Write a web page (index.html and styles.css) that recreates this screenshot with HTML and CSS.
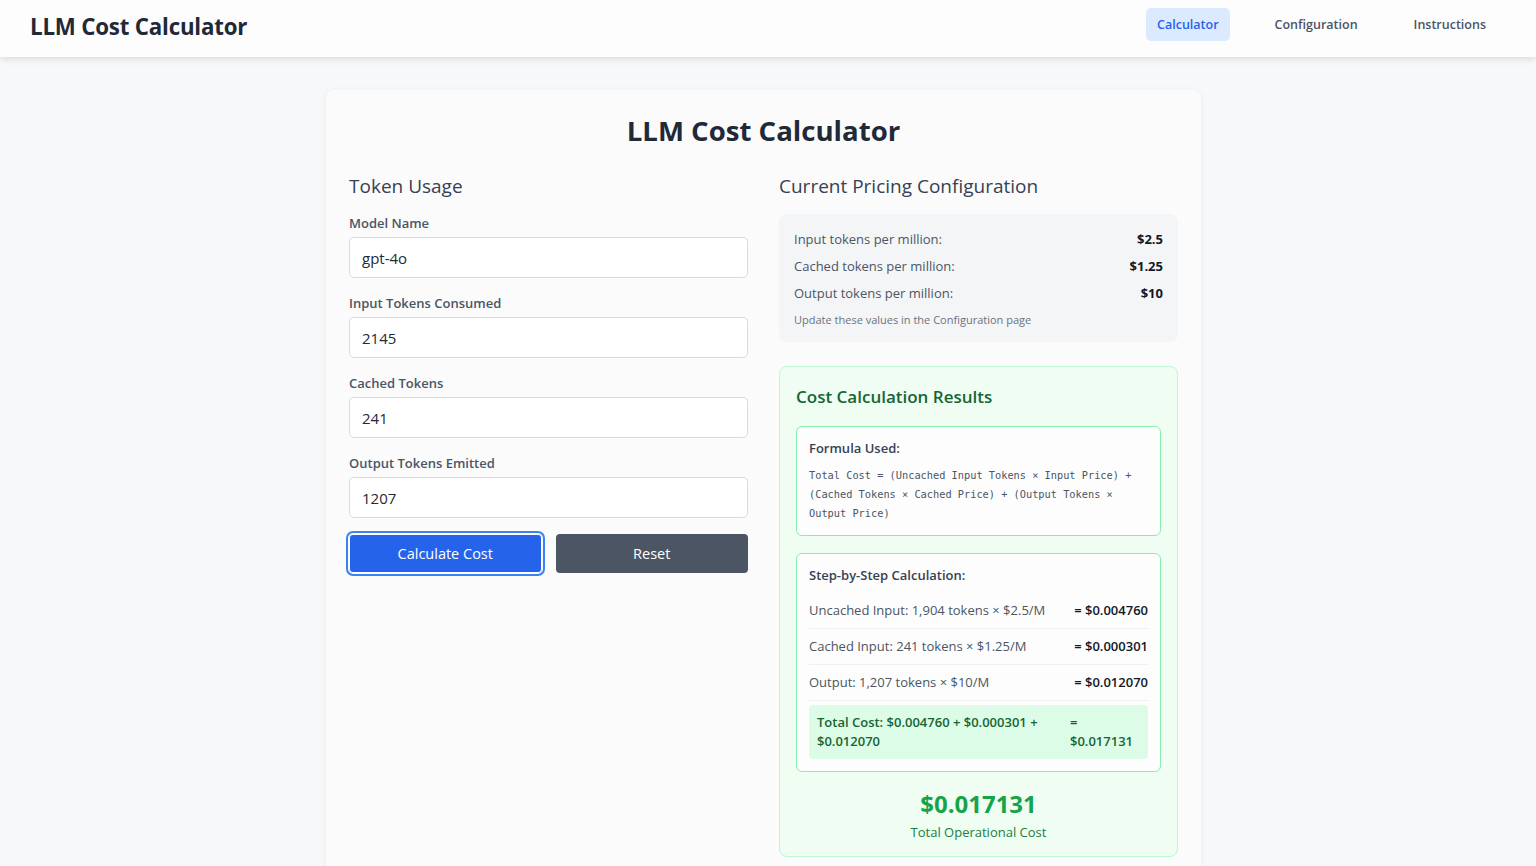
FILE: index.html
```html
<!DOCTYPE html>
<html lang="en">
<head>
    <meta charset="UTF-8">
    <meta name="viewport" content="width=device-width, initial-scale=1.0">
    <title>LLM Cost Calculator</title>
    <link rel="stylesheet" href="styles.css">
</head>
<body>
    <header class="topbar">
        <div class="brand">LLM Cost Calculator</div>
        <nav class="nav">
            <a class="nav-link active" href="#">Calculator</a>
            <a class="nav-link" href="#">Configuration</a>
            <a class="nav-link" href="#">Instructions</a>
        </nav>
    </header>

    <main class="page">
        <section class="card">
            <h1 class="card-title">LLM Cost Calculator</h1>

            <div class="columns">
                <div class="col">
                    <h2 class="section-title">Token Usage</h2>

                    <div class="field">
                        <label for="modelName">Model Name</label>
                        <input type="text" id="modelName" value="gpt-4o">
                    </div>
                    <div class="field">
                        <label for="inputTokens">Input Tokens Consumed</label>
                        <input type="text" id="inputTokens" value="2145">
                    </div>
                    <div class="field">
                        <label for="cachedTokens">Cached Tokens</label>
                        <input type="text" id="cachedTokens" value="241">
                    </div>
                    <div class="field">
                        <label for="outputTokens">Output Tokens Emitted</label>
                        <input type="text" id="outputTokens" value="1207">
                    </div>

                    <div class="buttons">
                        <button class="btn btn-primary">Calculate Cost</button>
                        <button class="btn btn-secondary">Reset</button>
                    </div>
                </div>

                <div class="col">
                    <h2 class="section-title">Current Pricing Configuration</h2>

                    <div class="pricing">
                        <div class="price-row"><span>Input tokens per million:</span><strong>$2.5</strong></div>
                        <div class="price-row"><span>Cached tokens per million:</span><strong>$1.25</strong></div>
                        <div class="price-row"><span>Output tokens per million:</span><strong>$10</strong></div>
                        <p class="hint">Update these values in the Configuration page</p>
                    </div>

                    <div class="results">
                        <h3 class="results-title">Cost Calculation Results</h3>

                        <div class="box">
                            <h4 class="box-title">Formula Used:</h4>
                            <code class="formula">Total Cost = (Uncached Input Tokens × Input Price) + (Cached Tokens × Cached Price) + (Output Tokens × Output Price)</code>
                        </div>

                        <div class="box steps-box">
                            <h4 class="box-title">Step-by-Step Calculation:</h4>
                            <div class="step"><span>Uncached Input: 1,904 tokens × $2.5/M</span><strong>= $0.004760</strong></div>
                            <div class="step"><span>Cached Input: 241 tokens × $1.25/M</span><strong>= $0.000301</strong></div>
                            <div class="step"><span>Output: 1,207 tokens × $10/M</span><strong>= $0.012070</strong></div>
                            <div class="step step-total"><span>Total Cost: $0.004760 + $0.000301 + $0.012070</span><span class="total-eq">= $0.017131</span></div>
                        </div>

                        <div class="grand-total">
                            <div class="amount">$0.017131</div>
                            <div class="amount-label">Total Operational Cost</div>
                        </div>
                    </div>
                </div>
            </div>
        </section>
    </main>
</body>
</html>
```

FILE: styles.css
```css
* {
    box-sizing: border-box;
}

body {
    font-family: 'Open Sans', 'Noto Sans', sans-serif;
    background-color: #f7f8fa;
    margin: 0;
    padding: 0;
    color: #1f2937;
}

.topbar {
    height: 57px;
    background-color: #fdfdfe;
    box-shadow: 0 2px 7px rgba(0, 0, 0, 0.13);
    display: flex;
    align-items: center;
    justify-content: space-between;
    padding: 0 39px 0 30px;
    position: relative;
}

.brand {
    font-size: 22.3px;
    font-weight: 700;
    color: #1f2937;
    letter-spacing: -0.2px;
    margin-top: -5px;
}

.nav {
    display: flex;
    gap: 34px;
    margin-top: -9px;
}

.nav-link {
    font-size: 12.5px;
    font-weight: 600;
    color: #4b5563;
    text-decoration: none;
    padding: 8px 11px;
    border-radius: 5px;
}

.nav-link.active {
    background-color: #dbeafe;
    color: #2563eb;
}

.page {
    padding: 33px 9px 0 0;
    display: flex;
    justify-content: center;
}

.card {
    width: 875px;
    background-color: #fbfbfc;
    border-radius: 8px;
    box-shadow: 0 1px 6px rgba(0, 0, 0, 0.06);
    padding: 21px 23px 30px;
}

.card-title {
    text-align: center;
    font-size: 27.6px;
    font-weight: 700;
    margin: 0 0 24px;
    color: #1f2937;
}

.columns {
    display: grid;
    grid-template-columns: 1fr 1fr;
    gap: 31px;
}

.section-title {
    font-size: 19px;
    font-weight: 500;
    color: #374151;
    margin: 0 0 15px;
}

.field {
    margin-bottom: 16px;
}

label {
    display: block;
    font-size: 13px;
    font-weight: 600;
    color: #4b5563;
    margin-bottom: 5px;
}

input {
    width: 100%;
    height: 41px;
    padding: 0 12px;
    font-family: inherit;
    font-size: 15px;
    color: #1f2937;
    background-color: #fff;
    border: 1px solid #d8dbe0;
    border-radius: 5px;
}

.buttons {
    display: flex;
    gap: 14px;
    margin-top: 16px;
}

.btn {
    flex: 1;
    height: 39px;
    font-family: inherit;
    font-size: 14.5px;
    color: #fff;
    border: none;
    border-radius: 4px;
    cursor: pointer;
}

.btn-primary {
    background-color: #2563eb;
    outline: 2px solid #3b82f6;
    outline-offset: 1px;
    box-shadow: 0 0 0 1px #fff inset;
}

.btn-secondary {
    background-color: #4b5563;
}

.pricing {
    background-color: #f4f5f7;
    border-radius: 8px;
    padding: 12px 15px 15px;
    margin-bottom: 24px;
}

.price-row {
    display: flex;
    justify-content: space-between;
    font-size: 13px;
    color: #4b5563;
    line-height: 27px;
}

.price-row strong {
    color: #111827;
    font-weight: 700;
}

.hint {
    font-size: 11px;
    color: #6b7280;
    margin: 5px 0 0;
}

.results {
    background-color: #effdf3;
    border: 1px solid #bbf7d0;
    border-radius: 8px;
    padding: 18px 16px 15px;
}

.results-title {
    font-size: 17px;
    font-weight: 600;
    color: #166534;
    margin: 0 0 18px;
}

.box {
    background-color: #fdfdfd;
    border: 1px solid #86efac;
    border-radius: 6px;
    padding: 12px;
    margin-bottom: 17px;
}

.steps-box {
    padding-bottom: 12px;
}

.box-title {
    font-size: 13px;
    font-weight: 600;
    color: #374151;
    margin: 0 0 9px;
}

.formula {
    display: block;
    font-family: 'DejaVu Sans Mono', monospace;
    font-size: 10.3px;
    line-height: 19px;
    color: #4b5563;
}

.step {
    display: flex;
    justify-content: space-between;
    align-items: center;
    font-size: 13px;
    color: #4b5563;
    padding: 8px 0;
    border-bottom: 1px solid #eef0f2;
    line-height: 19px;
}

.step strong {
    color: #111827;
    font-weight: 600;
}

.step-total {
    background-color: #dcfce7;
    border: none;
    border-radius: 4px;
    margin-top: 4px;
    padding: 8px 8px;
    color: #166534;
    font-weight: 600;
    align-items: flex-start;
}

.step-total span:first-child {
    max-width: 240px;
}

.total-eq {
    max-width: 70px;
}

.grand-total {
    text-align: center;
    margin-top: -2px;
}

.amount {
    font-size: 24px;
    font-weight: 700;
    color: #16a34a;
}

.amount-label {
    font-size: 13px;
    color: #15803d;
    margin-top: 3px;
}
```
